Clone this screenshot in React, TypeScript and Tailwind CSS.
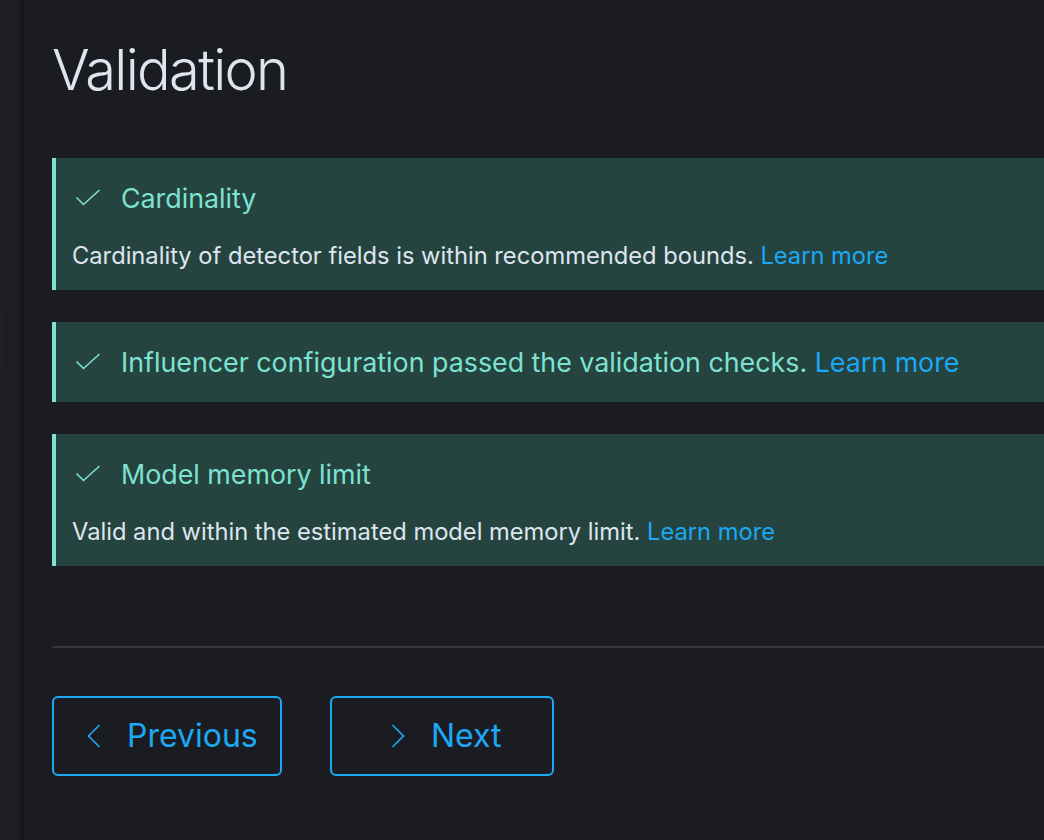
import React from "react";

function CheckIcon() {
  return (
    <svg width="26" height="18" viewBox="0 0 26 18" fill="none" className="shrink-0">
      <path d="M1.5 8.5L8.5 15.5L24.5 1" stroke="#7de2d1" strokeWidth="1.6" />
    </svg>
  );
}

function Chevron({ dir }: { dir: "left" | "right" }) {
  return (
    <svg width="14" height="24" viewBox="0 0 14 24" fill="none" className="shrink-0">
      {dir === "left" ? (
        <path d="M12.5 1L1.5 12L12.5 23" stroke="#1ba9f5" strokeWidth="1.7" />
      ) : (
        <path d="M1.5 1L12.5 12L1.5 23" stroke="#1ba9f5" strokeWidth="1.7" />
      )}
    </svg>
  );
}

function Callout({ title, children }: { title: React.ReactNode; children?: React.ReactNode }) {
  return (
    <div className="border-l-4 border-[#7de2d1] bg-[#25443f] py-[20px] pl-[16px] pr-4">
      <div className="flex h-[40px] items-center gap-[20px] pl-[3px] text-[26.8px] text-[#7de2d1]">
        <CheckIcon />
        <span>{title}</span>
      </div>
      {children && (
        <p className="mt-[22px] mb-[-2px] text-[23.7px] leading-[32px] text-[#dfe5ef]">{children}</p>
      )}
    </div>
  );
}

function LearnMore() {
  return <a className="cursor-pointer text-[#1ba9f5]">Learn more</a>;
}

export default function App() {
  return (
    <div
      className="flex h-[840px] w-[1044px] overflow-hidden bg-[#1b1c21]"
      style={{ fontFamily: "Inter, 'Liberation Sans', sans-serif" }}
    >
      {/* collapsed side nav */}
      <div className="relative w-[20px] shrink-0 bg-[#1d1e24]">
        <div className="absolute left-0 top-[310px] h-[56px] w-[3px] rounded-r bg-[#202128]" />
      </div>
      <div className="w-[5px] shrink-0 bg-[#17181c]" />

      <main className="min-w-0 flex-1 pl-[27px] pt-[42px]">
        <h1 className="text-[56px] font-light leading-[56px] tracking-[-0.03em] text-[#dfe5ef]">
          Validation
        </h1>

        <div className="mt-[60px] flex w-[1040px] flex-col gap-[32px]">
          <Callout title="Cardinality">
            Cardinality of detector fields is within recommended bounds. <LearnMore />
          </Callout>
          <Callout
            title={
              <>
                Influencer configuration passed the validation checks. <LearnMore />
              </>
            }
          />
          <Callout title="Model memory limit">
            Valid and within the estimated model memory limit. <LearnMore />
          </Callout>
        </div>

        <div className="mt-[80px] h-[2px] w-[1040px] bg-[#343741]" />

        <div className="mt-[48px] flex gap-[48px]">
          <button className="flex h-[80px] min-w-[224px] items-center justify-center gap-[26px] rounded-[6px] border-2 border-[#1ba9f5] pl-[33px] pr-[22px] text-[32px] text-[#1ba9f5]">
            <Chevron dir="left" />
            <span>Previous</span>
          </button>
          <button className="flex h-[80px] min-w-[224px] items-center justify-center gap-[26px] rounded-[6px] border-2 border-[#1ba9f5] pl-[33px] pr-[24px] text-[32px] text-[#1ba9f5]">
            <Chevron dir="right" />
            <span>Next</span>
          </button>
        </div>
      </main>
    </div>
  );
}
